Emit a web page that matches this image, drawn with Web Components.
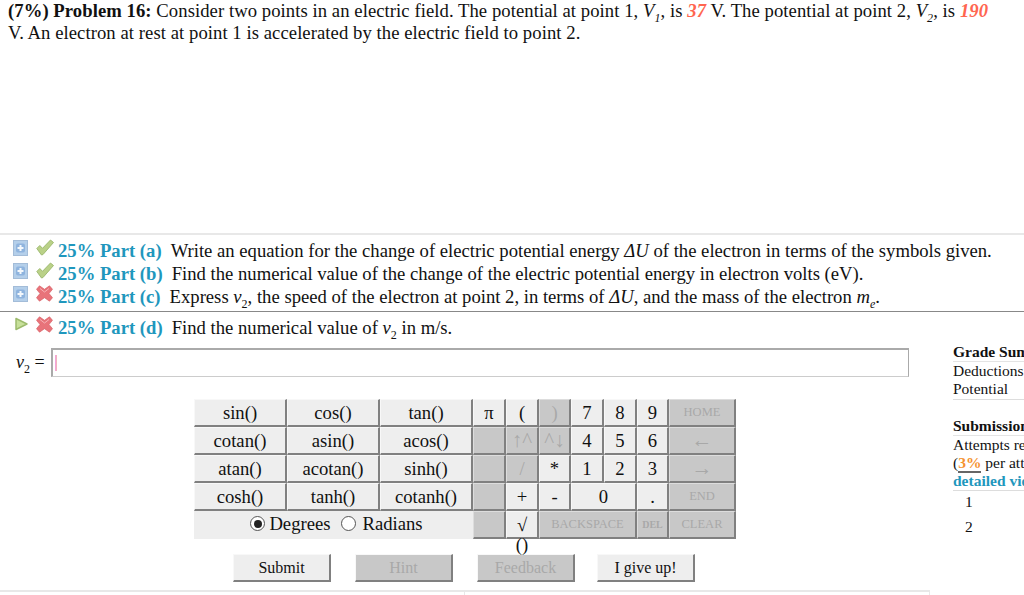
<!DOCTYPE html>
<html>
<head>
<meta charset="utf-8">
<style>
html, body { margin: 0; padding: 0; background: #fff; overflow: hidden; height: 595px; }
body { font-family: "Liberation Serif", serif; font-size: 18.667px; color: #111; }
sub { font-size: 12px; line-height: 0; }
.red { color: #ff6650; font-weight: bold; font-style: italic; }
.work { display: flex; }
</style>
</head>
<body>
<problem-text>
  <b>(7%) Problem 16:</b> Consider two points in an electric field. The potential at point 1, <i>V<sub>1</sub></i>, is <span class="red">37</span> V. The potential at point 2, <i>V<sub>2</sub></i>, is <span class="red">190</span> V. An electron at rest at point 1 is accelerated by the electric field to point 2.
</problem-text>

<part-list>
  <part-row mark="ok" label="25% Part (a)">Write an equation for the change of electric potential energy <i>ΔU</i> of the electron in terms of the symbols given.</part-row>
  <part-row mark="ok" label="25% Part (b)">Find the numerical value of the change of the electric potential energy in electron volts (eV).</part-row>
  <part-row mark="bad" label="25% Part (c)">Express <i>v</i><sub>2</sub>, the speed of the electron at point 2, in terms of <i>ΔU</i>, and the mass of the electron <i>m<sub>e</sub></i>.</part-row>
</part-list>
<part-row current mark="bad" label="25% Part (d)">Find the numerical value of <i>v</i><sub>2</sub> in m/s.</part-row>

<div class="work">
  <answer-panel></answer-panel>
  <grade-side></grade-side>
</div>

<script>
const ICONS = {
  plus: `<svg width="15" height="16" viewBox="0 0 15 16"><rect x=".5" y=".5" width="14" height="15" fill="#b4cfea" stroke="#a3bcd8"/><rect x="3" y="3.500" width="9" height="9" rx="2" fill="#8fb4de"/><path d="M7.500 5v6M4.500 8h6" stroke="#f4f8fc" stroke-width="2"/></svg>`,
  ok: `<svg width="18" height="17" viewBox="0 0 18 17"><path d="M.8 9.500l3-3 2.700 2.800L14.500 1l3 2.500L7 15.500l-1.500.5z" fill="#bad188" stroke="#9ab76c" stroke-width=".9"/></svg>`,
  bad: `<svg width="17" height="17" viewBox="0 0 17 17"><path d="M3.500.8l5 3.500 5-3.500 3 3.500-3.500 4.200 3.500 4.200-3 3.500-5-3.500-5 3.500-3-3.500L4 8.500.5 4.300z" fill="#e8737a" stroke="#d9646a" stroke-width=".7"/><path d="M4 3.500l4.500 3.500 4.500-3.500" fill="none" stroke="#f6b3b6" stroke-width="1"/></svg>`,
  play: `<svg width="15" height="14" viewBox="0 0 15 14"><path d="M2 1.500l11 5.500-11 5.500z" fill="#c7e09a" stroke="#9dbb6d" stroke-width="1.500" stroke-linejoin="round"/></svg>`
}

class ProblemText extends HTMLElement {
  constructor() {
    super()
    this.attachShadow({ mode: 'open' }).innerHTML = `
      <style>
        :host { display: block; height: 233px; padding: 0 24px 0 8px; line-height: 22px; letter-spacing: .06px; box-sizing: border-box; }
      </style>
      <slot></slot>`
  }
}

class PartList extends HTMLElement {
  constructor() {
    super()
    this.attachShadow({ mode: 'open' }).innerHTML = `
      <style>
        :host { display: block; border-top: 2px solid #e8e8e8; border-bottom: 1px solid #888; padding-top: 4px; height: 72px; }
      </style>
      <slot></slot>`
  }
}

class PartRow extends HTMLElement {
  constructor() {
    super()
    const current = this.hasAttribute('current')
    this.attachShadow({ mode: 'open' }).innerHTML = `
      <style>
        :host { display: flex; height: 23px; line-height: 23px; padding-left: 13px; white-space: nowrap; }
        :host([current]) { height: 25px; margin-top: 4px; padding-left: 14px; }
        .ic { width: 15px; padding-top: 1px; }
        .ic2 { width: 22px; margin-left: 8px; }
        :host([current]) .ic2 { margin-left: 7px; }
        b { color: #1f97bd; margin-right: 9px; }
        svg { display: block; }
      </style>
      <span class="ic">${ICONS[current ? 'play' : 'plus']}</span>
      <span class="ic2">${ICONS[this.getAttribute('mark')]}</span>
      <b>${this.getAttribute('label')}</b>
      <span><slot></slot></span>`
  }
}

class CalcKey extends HTMLElement {
  constructor() {
    super()
    this.attachShadow({ mode: 'open' }).innerHTML = `
      <style>
        :host { display: flex; align-items: center; justify-content: center; box-sizing: border-box; height: 28px; background: #eee; color: #111; border: 1px solid #f8f8f8; border-right: 2px solid #808080; border-bottom: 2px solid #808080; cursor: default; font-size: 18.667px; white-space: nowrap; }
        :host([off]) { background: #c8c8c8; color: #a8a8a8; border-top-color: #ddd; border-left-color: #ddd; }
        :host([small]) { font-size: 12.500px; }
        :host([arrow]) { font-size: 21px; }
      </style>
      <slot></slot>`
  }
}

class RadioOpt extends HTMLElement {
  constructor() {
    super()
    this.attachShadow({ mode: 'open' }).innerHTML = `
      <style>
        :host { display: inline-flex; align-items: center; gap: 4px; }
        :host(.far) { gap: 7px; }
        .dot { width: 15px; height: 15px; box-sizing: border-box; border: 1px solid #555; border-radius: 50%; background: #fff; display: flex; align-items: center; justify-content: center; }
        :host([on]) .dot::after { content: ""; width: 8px; height: 8px; border-radius: 50%; background: #222; }
      </style>
      <span class="dot"></span><slot></slot>`
  }
}

class CalcPad extends HTMLElement {
  constructor() {
    super()
    this.attachShadow({ mode: 'open' }).innerHTML = `
      <style>
        :host { display: grid; width: 542px; grid-template-columns: 93px 93px 93px 33px 33px 32px 33px 33px 32px 67px; grid-auto-rows: 28px; }
        .radios { grid-column: span 3; background: #eee; display: flex; justify-content: center; align-items: center; gap: 10px; font-size: 18.667px; padding-left: 6px; padding-bottom: 3px; box-sizing: border-box; }
        .wide2 { grid-column: span 2; }
        .wide3 { grid-column: span 3; }
        .root { position: relative; }
        .paren { position: absolute; left: 0; right: 0; top: 23px; text-align: center; line-height: 20px; }
      </style>
      <calc-key>sin()</calc-key><calc-key>cos()</calc-key><calc-key>tan()</calc-key><calc-key>π</calc-key><calc-key>(</calc-key><calc-key off>)</calc-key><calc-key>7</calc-key><calc-key>8</calc-key><calc-key>9</calc-key><calc-key off small>HOME</calc-key>
      <calc-key>cotan()</calc-key><calc-key>asin()</calc-key><calc-key>acos()</calc-key><calc-key off></calc-key><calc-key off arrow>↑^</calc-key><calc-key off arrow>^↓</calc-key><calc-key>4</calc-key><calc-key>5</calc-key><calc-key>6</calc-key><calc-key off arrow>←</calc-key>
      <calc-key>atan()</calc-key><calc-key>acotan()</calc-key><calc-key>sinh()</calc-key><calc-key off></calc-key><calc-key off>/</calc-key><calc-key>*</calc-key><calc-key>1</calc-key><calc-key>2</calc-key><calc-key>3</calc-key><calc-key off arrow>→</calc-key>
      <calc-key>cosh()</calc-key><calc-key>tanh()</calc-key><calc-key>cotanh()</calc-key><calc-key off></calc-key><calc-key>+</calc-key><calc-key>-</calc-key><calc-key class="wide2">0</calc-key><calc-key>.</calc-key><calc-key off small>END</calc-key>
      <div class="radios"><radio-opt on>Degrees</radio-opt><radio-opt class="far">Radians</radio-opt></div><calc-key off></calc-key>
      <calc-key class="root">√<span class="paren">()</span></calc-key><calc-key off small class="wide3">BACKSPACE</calc-key><calc-key off small style="font-size:10px;font-weight:bold">DEL</calc-key><calc-key off small>CLEAR</calc-key>`
  }
}

class ActionBtn extends HTMLElement {
  constructor() {
    super()
    this.attachShadow({ mode: 'open' }).innerHTML = `
      <style>
        :host { display: flex; align-items: center; justify-content: center; box-sizing: border-box; width: 98px; height: 28px; background: #eee; color: #111; border: 1px solid #f8f8f8; border-right: 2px solid #808080; border-bottom: 2px solid #808080; font-size: 16px; }
        :host([off]) { background: #c8c8c8; color: #a8a8a8; }
      </style>
      <slot></slot>`
  }
}

class AnswerPanel extends HTMLElement {
  constructor() {
    super()
    this.attachShadow({ mode: 'open' }).innerHTML = `
      <style>
        :host { display: block; width: 930px; flex: none; }
        .main { height: 242px; padding-top: 7px; border-bottom: 2px solid #e8e8e8; }
        .line { display: flex; align-items: center; padding-left: 16px; height: 29px; }
        .lbl { width: 35px; flex: none; font-size: 18px; white-space: nowrap; }
        sub { font-size: 12px; line-height: 0; }
        .box { width: 858px; height: 29px; box-sizing: border-box; border: 2px solid #aaa; border-right-width: 1px; border-bottom: 1px solid #ccc; display: flex; align-items: center; padding-left: 2px; }
        .caret { width: 2px; height: 16px; background: linear-gradient(90deg, #f3a6dc, #f3a6dc 50%, #f0c0a0); }
        calc-pad { margin: 22px 0 0 194px; }
        .btns { display: flex; margin: 15px 0 0 233px; }
        action-btn { margin-right: 24px; }
        action-btn.last { margin-left: -2px; }
        .foot { display: flex; height: 4px; border-right: 1px solid #e8e8e8; }
        .foot span { width: 464px; border-right: 1px solid #e8e8e8; }
      </style>
      <div class="main">
        <div class="line"><span class="lbl"><i>v</i><sub>2</sub> =</span><div class="box"><span class="caret"></span></div></div>
        <calc-pad></calc-pad>
        <div class="btns">
          <action-btn>Submit</action-btn><action-btn off>Hint</action-btn><action-btn off>Feedback</action-btn><action-btn class="last">I give up!</action-btn>
        </div>
      </div>
      <div class="foot"><span></span></div>`
  }
}

class GradeSide extends HTMLElement {
  constructor() {
    super()
    this.attachShadow({ mode: 'open' }).innerHTML = `
      <style>
        :host { display: block; margin-left: 23px; padding-top: 2px; width: 71px; overflow: hidden; font-size: 15.500px; line-height: 18px; white-space: nowrap; }
        .h { font-weight: bold; border-bottom: 1px solid #e4e4e4; width: 300px; }
        .bl { border-bottom: 1px solid #ddd; width: 300px; height: 19px; }
        .sub { margin-top: 17px; }
        em { font-style: normal; font-weight: bold; color: #f59331; border-bottom: 2px solid #666; }
        .link { font-weight: bold; color: #1f97bd; border-bottom: 1px solid #ddd; width: 300px; }
        .n { padding-left: 12px; height: 25px; line-height: 25px; }
        .n.first { margin-top: -2px; }
      </style>
      <div class="h">Grade Summary</div>
      <div>Deductions</div>
      <div class="bl">Potential</div>
      <div class="h sub">Submissions</div>
      <div>Attempts remaining</div>
      <div>(<em>3%</em> per attempt)</div>
      <div class="link">detailed view</div>
      <div class="n first">1</div>
      <div class="n">2</div>`
  }
}

customElements.define('problem-text', ProblemText)
customElements.define('part-list', PartList)
customElements.define('part-row', PartRow)
customElements.define('calc-key', CalcKey)
customElements.define('radio-opt', RadioOpt)
customElements.define('calc-pad', CalcPad)
customElements.define('action-btn', ActionBtn)
customElements.define('answer-panel', AnswerPanel)
customElements.define('grade-side', GradeSide)
</script>
</body>
</html>
